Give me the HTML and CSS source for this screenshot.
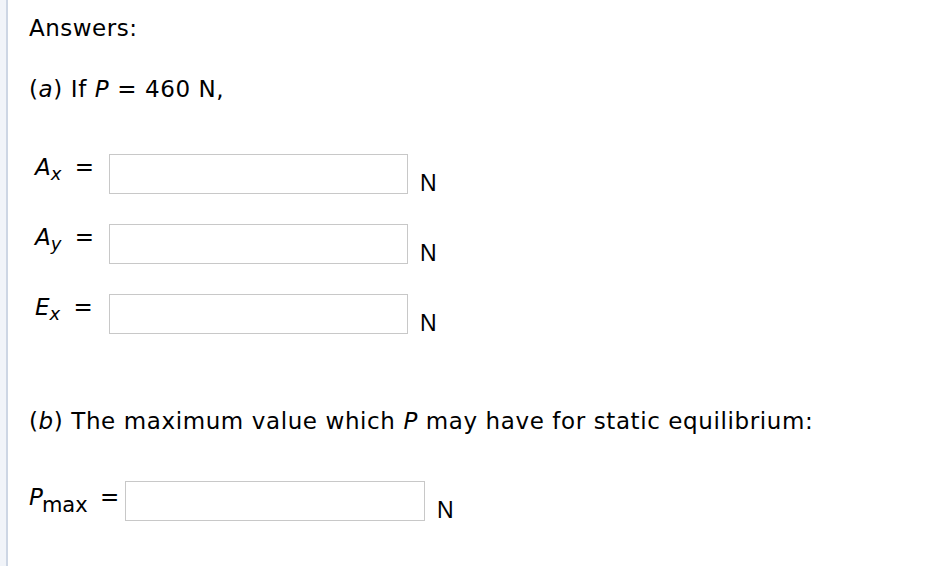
FILE: index.html
```html
<!DOCTYPE html>
<html lang="en">
<head>
  <meta charset="UTF-8" />
  <title>Answers</title>
  <link rel="stylesheet" href="styles.css">
</head>
<body>
  <div class="page">
    <p class="heading">Answers:</p>

    <!-- part (a) -->
    <p class="part">(<i>a</i>) If <i>P</i> = 460 N,</p>

    <div class="answers">
      <div class="row">
        <span class="label"><i>A</i><sub><i>x</i></sub> =</span>
        <input type="text" class="box">
        <span class="unit">N</span>
      </div>
      <div class="row">
        <span class="label"><i>A</i><sub><i>y</i></sub> =</span>
        <input type="text" class="box">
        <span class="unit">N</span>
      </div>
      <div class="row">
        <span class="label"><i>E</i><sub><i>x</i></sub> =</span>
        <input type="text" class="box">
        <span class="unit">N</span>
      </div>
    </div>

    <!-- part (b) -->
    <p class="part part-b">(<i>b</i>) The maximum value which <i>P</i> may have for static equilibrium:</p>

    <div class="row row-max">
      <span class="label label-max"><i>P</i><sub>max</sub> =</span>
      <input type="text" class="box box-max">
      <span class="unit">N</span>
    </div>
  </div>
</body>
</html>
```

FILE: styles.css
```css
body { margin: 0; background: #f1f4f9; font-family: "DejaVu Sans", Verdana, sans-serif; color: #000; }
.page { margin-left: 6px; border-left: 2px solid #cdd6e4; background: #fff; min-height: 566px; padding: 15px 0 0 21px; box-sizing: border-box; }
p { margin: 0; }
.heading { font-size: 23px; line-height: 26px; letter-spacing: 0.5px; }
.part { font-size: 23px; line-height: 26px; letter-spacing: 0.6px; margin-top: 35px; }
.answers { display: flex; flex-direction: column; gap: 30px; margin-top: 52px; }
.row { display: flex; align-items: flex-start; height: 40px; }
.label { font-size: 23px; line-height: 26px; width: 74px; padding-left: 6px; margin-top: 0; white-space: nowrap; }
.label sub { font-size: 18px; vertical-align: -5px; line-height: 0; margin-right: 6px; }
.box { width: 299px; height: 40px; box-sizing: border-box; border: 1px solid #c8c8c8; margin: 0; padding: 0 4px; font-size: 16px; }
.unit { font-family: "Liberation Sans", Arial, sans-serif; font-size: 23px; align-self: flex-end; margin-left: 12px; line-height: 22px; margin-bottom: 0; }
.part-b { margin-top: 74px; }
.row-max { margin-top: 47px; }
.label-max { width: 96px; padding-left: 0; margin-top: 3px; }
.label-max sub { font-size: 21px; vertical-align: -7px; margin-left: -1px; margin-right: 5px; }
.box-max { width: 300px; }
```
